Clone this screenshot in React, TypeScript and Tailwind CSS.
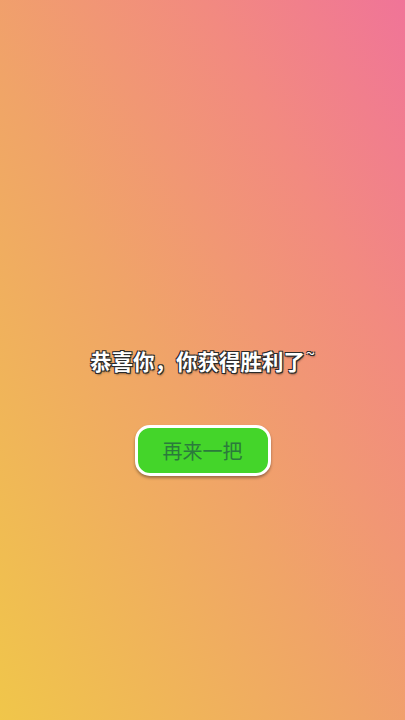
export default function App() {
  return (
    <main className="flex h-[720px] w-full flex-col items-center bg-[linear-gradient(to_top_right,#f0c64a_0%,#f0a468_45%,#f28a80_75%,#f07498_100%)] font-['Noto_Sans_CJK_SC',sans-serif]">
      <h1 className="mt-[346px] flex items-start text-[21.5px] leading-[30px] font-bold text-white [text-shadow:1px_1px_0_#2a2a2a,-1px_-1px_0_#2a2a2a,1px_-1px_0_#2a2a2a,-1px_1px_0_#2a2a2a,1px_2px_2px_rgba(0,0,0,0.4)]">
        恭喜你，你获得胜利了
        <span className="-mt-[9px] ml-[1px] text-[16px] font-normal">~</span>
      </h1>
      <button
        type="button"
        className="mt-[49px] flex h-[51px] w-[136px] items-center justify-center rounded-[15px] border-[3px] border-white bg-[#44d52a] text-[20px] text-[#2b7a3c] shadow-[0_2px_3px_rgba(0,0,0,0.35)]"
      >
        再来一把
      </button>
    </main>
  );
}
